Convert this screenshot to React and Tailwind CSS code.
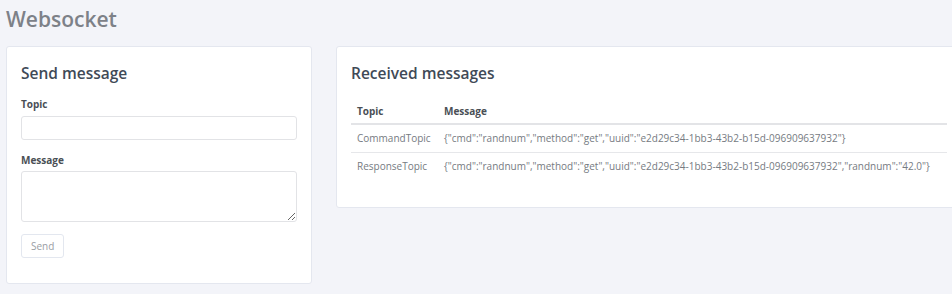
const ROWS = [
  {
    topic: 'CommandTopic',
    message: '{"cmd":"randnum","method":"get","uuid":"e2d29c34-1bb3-43b2-b15d-096909637932"}',
  },
  {
    topic: 'ResponseTopic',
    message: '{"cmd":"randnum","method":"get","uuid":"e2d29c34-1bb3-43b2-b15d-096909637932","randnum":"42.0"}',
  },
];

export default function App() {
  const font = { fontFamily: '"Open Sans", "Noto Sans", sans-serif' };
  const inputCls = 'block w-full border border-[#e2e3e6] rounded-[3px] bg-white';

  return (
    <div className="w-[952px] h-[294px] overflow-hidden bg-[#f3f4f9] px-[6px]" style={font}>
      <h1 className="text-[21px] leading-[28px] pt-[5px] text-[#7d8188] font-semibold">Websocket</h1>

      <div className="flex items-start gap-[24px] mt-[13px]">
        {/* Send */}
        <div className="w-[306px] shrink-0 bg-white border border-[#e4e7ef] rounded-[3px] px-[14px] pt-[16px] pb-[25px]">
          <h2 className="text-[15.5px] leading-[20px] text-[#3f4a57] font-semibold">Send message</h2>
          <label className="block mt-[13px] mb-[4px] text-[10px] leading-[16px] font-bold text-[#4a4f55]">Topic</label>
          <input className={`${inputCls} h-[24px]`} />
          <label className="block mt-[12px] mb-[3px] text-[10px] leading-[16px] font-bold text-[#4a4f55]">Message</label>
          <textarea className={`${inputCls} h-[51px] resize-y`} />
          <button className="mt-[12px] h-[24px] px-[9px] border border-[#e3e7ef] rounded-[3px] text-[10px] text-[#9a9ea4] bg-white">
            Send
          </button>
        </div>

        {/* Received */}
        <div className="w-[626px] shrink-0 bg-white border border-[#e4e7ef] rounded-[3px] px-[14px] pt-[16px] pb-[27px]">
          <h2 className="text-[15.5px] leading-[20px] text-[#3f4a57] font-semibold">Received messages</h2>
          <table className="w-full mt-[17px] text-[10px] text-left border-collapse">
            <thead>
              <tr className="h-[24px] border-b-2 border-[#e3e4e7]">
                <th className="px-[6px] w-[87px] font-bold text-[#4a4f55] align-middle">Topic</th>
                <th className="px-[6px] font-bold text-[#4a4f55] align-middle">Message</th>
              </tr>
            </thead>
            <tbody>
              {ROWS.map((r, i) => (
                <tr key={r.topic} className={`h-[28px] ${i === 0 ? 'border-b border-[#e6e7ea]' : ''}`}>
                  <td className="px-[6px] text-[#767b82] whitespace-nowrap">{r.topic}</td>
                  <td className="px-[6px] text-[#767b82] whitespace-nowrap">{r.message}</td>
                </tr>
              ))}
            </tbody>
          </table>
        </div>
      </div>
    </div>
  );
}
